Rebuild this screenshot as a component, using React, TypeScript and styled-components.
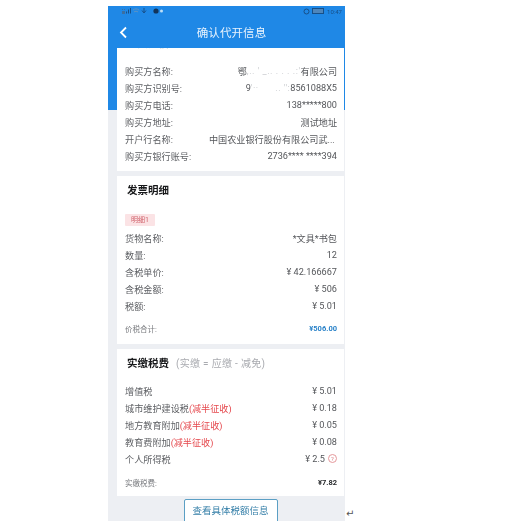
import React from "react";
import styled, { createGlobalStyle } from "styled-components";

const Global = createGlobalStyle`
  html, body { margin: 0; padding: 0; background: #fff; }
  body { font-family: "Roboto", "Noto Sans CJK SC", sans-serif; }
`;

const Page = styled.div`
  position: relative;
  width: 525px;
  height: 525px;
  padding: 6px 0 0 108px;
  box-sizing: border-box;
  background: #fff;
  overflow: hidden;
`;

const Phone = styled.div`
  width: 237px;
  height: 515px;
  display: flex;
  flex-direction: column;
  overflow: hidden;
  background: #edeff3;
  filter: blur(0.35px);
`;

const Header = styled.header`
  height: 42px;
  flex: none;
  background: #1f88e6;
  color: #fff;
  display: flex;
  flex-direction: column;
`;

const StatusBar = styled.div`
  height: 10px;
  padding: 0 3px 0 13px;
  display: flex;
  align-items: center;
  justify-content: space-between;
  color: #174f87;
  font-size: 6px;
`;

const StatusGroup = styled.div`
  display: flex;
  align-items: center;
  gap: 2px;
`;

const NavBar = styled.div`
  position: relative;
  flex: 1;
  display: flex;
  align-items: center;
  justify-content: center;
  padding: 0 0 1px 10px;
  font-size: 11.5px;
  letter-spacing: 0.1px;
  color: #e8f3fd;
`;

const Back = styled.svg`
  position: absolute;
  left: 11px;
  top: 10px;
`;

const Content = styled.main`
  flex: 1;
  padding: 0 0 0 9px;
  display: flex;
  flex-direction: column;
  background: linear-gradient(#1f88e6 62px, transparent 62px);
`;

const Card = styled.section<{ $h: number }>`
  height: ${(p) => p.$h}px;
  flex: none;
  background: #fff;
  padding: 0 7px 0 8px;
  box-sizing: border-box;
  overflow: hidden;
  margin-bottom: 5px;
  margin-right: 1px;
`;

const ClippedTitle = styled.div`
  margin-top: -11px;
  height: 25.5px;
  padding-left: 2px;
  font-size: 10.5px;
  line-height: 13px;
  font-weight: 700;
  color: #8a8c90;
`;

const Rows = styled.div`
  padding-top: 0;
`;

const Row = styled.div`
  height: 17px;
  display: flex;
  align-items: center;
  justify-content: space-between;
  font-size: 9.15px;
  color: #5d5f63;
  white-space: nowrap;
`;

const Value = styled.span`
  color: #54565a;
  display: flex;
  align-items: center;
`;

const Redacted = styled.span`
  color: #c9cbcf;
  letter-spacing: 0.5px;
`;

const Title = styled.h2<{ $h: number }>`
  margin: 0;
  padding: 8px 0 0 2px;
  height: ${(p) => p.$h}px;
  box-sizing: border-box;
  font-size: 10.5px;
  line-height: 14px;
  font-weight: 700;
  color: #17181a;
  white-space: nowrap;
`;

const TitleNote = styled.span`
  margin-left: 7px;
  font-weight: 400;
  color: #a9abb0;
  font-size: 10px;
  letter-spacing: 0.3px;
`;

const Tag = styled.div`
  width: 30px;
  height: 12px;
  margin-top: 7px;
  margin-bottom: 3px;
  background: #fbe3e5;
  color: #d1646d;
  font-size: 7px;
  line-height: 12px;
  text-align: center;
  border-radius: 1px;
`;

const Total = styled.div<{ $top: number }>`
  margin-top: ${(p) => p.$top}px;
  height: 12px;
  display: flex;
  align-items: center;
  justify-content: space-between;
  font-size: 7.5px;
  color: #77797d;
`;

const Amount = styled.b<{ $blue?: boolean }>`
  font-size: 7.5px;
  color: ${(p) => (p.$blue ? "#2b83c9" : "#26282b")};
`;

const Cut = styled.span`
  color: #e5484d;
`;

const Help = styled.span`
  width: 9px;
  height: 9px;
  margin-left: 3px;
  box-sizing: border-box;
  border: 1px solid #e5989b;
  border-radius: 50%;
  color: #dc7d82;
  font-size: 6px;
  line-height: 7px;
  text-align: center;
`;

const ActionBar = styled.div`
  display: flex;
  justify-content: center;
  margin-top: -2px;
  padding-right: 1px;
`;

const Action = styled.button`
  width: 94px;
  height: 26px;
  background: #fff;
  border: 1px solid #5b9fc4;
  border-radius: 2px;
  color: #357fa8;
  font-family: inherit;
  font-size: 9.5px;
  padding: 0 0 4px;
`;

const ReturnMark = styled.span`
  position: absolute;
  left: 346px;
  top: 508px;
  font-size: 10px;
  color: #555;
  font-family: "DejaVu Sans", sans-serif;
`;

const Signal = () => (
  <svg width="30" height="8" viewBox="0 0 30 8">
    <path d="M1 2h1v1H1zM3 2h1v1H3zM1 4h3v3H1z" fill="#3d6f9f" />
    <path d="M5.500 6.500v-2M7.500 6.500v-4M9.500 6.500V1" stroke="#174f87" strokeWidth="1" />
    <path d="M12 3c2-1.500 4-1.500 6 0M13 5c1.300-1 2.700-1 4 0" stroke="#5e93c4" fill="none" />
    <path d="M23 1v4M21 3.500 23 6l2-2.500" stroke="#174f87" fill="none" />
  </svg>
);

const buyer: [string, React.ReactNode][] = [
  ["购买方名称:", <><span>鄂</span><Redacted>,.. '  _.. . . . .:' </Redacted><span>有限公司</span></>],
  ["购买方识别号:", <><span>9</span><Redacted>'·· &nbsp; &nbsp; &nbsp;.. '':</Redacted><span>8561088X5</span></>],
  ["购买方电话:", "138*****800"],
  ["购买方地址:", "测试地址"],
  ["开户行名称:", <>中国农业银行股份有限公司武...&nbsp;</>],
  ["购买方银行账号:", "2736**** ****394"],
];

const goods = [
  ["货物名称:", "*文具*书包"],
  ["数量:", "12"],
  ["含税单价:", "¥ 42.166667"],
  ["含税金额:", "¥ 506"],
  ["税额:", "¥ 5.01"],
];

export default function App() {
  return (
    <Page>
      <Global />
      <Phone>
        <Header>
          <StatusBar>
            <StatusGroup>
              <Signal />
              <svg width="10" height="6" viewBox="0 0 10 6">
                <circle cx="3" cy="3" r="2.600" fill="#12345a" />
                <circle cx="8.500" cy="3" r="1.500" fill="#bfe0f7" />
              </svg>
            </StatusGroup>
            <StatusGroup>
              <svg width="7" height="7" viewBox="0 0 7 7">
                <circle cx="3.500" cy="3.500" r="2.500" fill="none" stroke="#174f87" />
              </svg>
              <svg width="13" height="6" viewBox="0 0 13 6">
                <rect x=".5" y=".5" width="11" height="5" fill="#4e86bb" stroke="#174f87" />
              </svg>
              <span>10:47</span>
            </StatusGroup>
          </StatusBar>
          <NavBar>
            <Back width="9" height="13" viewBox="0 0 9 13">
              <path d="M7 1.500 2 6.500l5 5" fill="none" stroke="#fff" strokeWidth="1.800" />
            </Back>
            确认代开信息
          </NavBar>
        </Header>
        <Content>
          <Card $h={123}>
            <ClippedTitle>购买方信息</ClippedTitle>
            <Rows>
              {buyer.map(([k, v]) => (
                <Row key={k}>
                  <span>{k}</span>
                  <Value>{v}</Value>
                </Row>
              ))}
            </Rows>
          </Card>
          <Card $h={168}>
            <Title $h={31}>发票明细</Title>
            <Tag>明细1</Tag>
            {goods.map(([k, v]) => (
              <Row key={k}>
                <span>{k}</span>
                <Value>{v}</Value>
              </Row>
            ))}
            <Total $top={8}>
              <span>价税合计:</span>
              <Amount $blue>¥506.00</Amount>
            </Total>
          </Card>
          <Card $h={147}>
            <Title $h={33}>
              实缴税费<TitleNote>(实缴 = 应缴 - 减免)</TitleNote>
            </Title>
            <Rows>
              <Row><span>增值税</span><Value>¥ 5.01</Value></Row>
              <Row><span>城市维护建设税<Cut>(减半征收)</Cut></span><Value>¥ 0.18</Value></Row>
              <Row><span>地方教育附加<Cut>(减半征收)</Cut></span><Value>¥ 0.05</Value></Row>
              <Row><span>教育费附加<Cut>(减半征收)</Cut></span><Value>¥ 0.08</Value></Row>
              <Row><span>个人所得税</span><Value>¥ 2.5<Help>?</Help></Value></Row>
            </Rows>
            <Total $top={9}>
              <span>实缴税费:</span>
              <Amount>¥7.82</Amount>
            </Total>
          </Card>
          <ActionBar>
            <Action>查看具体税额信息</Action>
          </ActionBar>
        </Content>
      </Phone>
      <ReturnMark>↵</ReturnMark>
    </Page>
  );
}
